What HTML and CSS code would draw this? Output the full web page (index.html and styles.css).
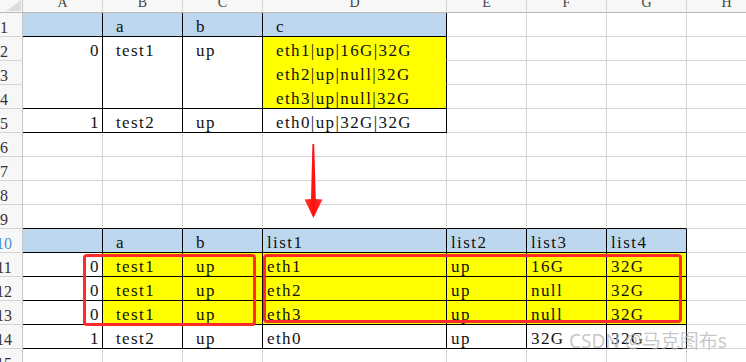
FILE: index.html
```html
<!DOCTYPE html>
<html>
<head>
<meta charset="utf-8">
<link rel="stylesheet" href="styles.css">
</head>
<body>
<div class="sheet">
  <div class="corner"><div class="tri"></div></div>
  <div class="ch"><span>A</span></div><div class="ch"><span>B</span></div><div class="ch"><span>C</span></div><div class="ch"><span>D</span></div><div class="ch"><span>E</span></div><div class="ch"><span>F</span></div><div class="ch"><span>G</span></div><div class="ch"><span>H</span></div>

  <div class="rh"><span>1</span></div>
  <div class="c hd kr kb"></div><div class="c hd kr kb ind">a</div><div class="c hd kr kb ind">b</div><div class="c hd kr kb ind">c</div><div class="c"></div><div class="c"></div><div class="c"></div><div class="c"></div>

  <div class="rh"><span>2</span></div>
  <div class="c m3 num kr kb">0</div><div class="c m3 ind kr kb">test1</div><div class="c m3 ind kr kb">up</div><div class="c y kr yb ind">eth1|up|16G|32G</div><div class="c"></div><div class="c"></div><div class="c"></div><div class="c"></div>

  <div class="rh"><span>3</span></div>
  <div class="c y kr yb ind">eth2|up|null|32G</div><div class="c"></div><div class="c"></div><div class="c"></div><div class="c"></div>

  <div class="rh"><span>4</span></div>
  <div class="c y kr kb ind">eth3|up|null|32G</div><div class="c"></div><div class="c"></div><div class="c"></div><div class="c"></div>

  <div class="rh"><span>5</span></div>
  <div class="c num kr kb">1</div><div class="c ind kr kb">test2</div><div class="c ind kr kb">up</div><div class="c ind kr kb">eth0|up|32G|32G</div><div class="c"></div><div class="c"></div><div class="c"></div><div class="c"></div>

  <div class="rh"><span>6</span></div>
  <div class="c"></div><div class="c"></div><div class="c"></div><div class="c"></div><div class="c"></div><div class="c"></div><div class="c"></div><div class="c"></div>

  <div class="rh"><span>7</span></div>
  <div class="c"></div><div class="c"></div><div class="c"></div><div class="c"></div><div class="c"></div><div class="c"></div><div class="c"></div><div class="c"></div>

  <div class="rh"><span>8</span></div>
  <div class="c"></div><div class="c"></div><div class="c"></div><div class="c"></div><div class="c"></div><div class="c"></div><div class="c"></div><div class="c"></div>

  <div class="rh"><span>9</span></div>
  <div class="c kb"></div><div class="c kb"></div><div class="c kb"></div><div class="c kb"></div><div class="c kb"></div><div class="c kb"></div><div class="c kb"></div><div class="c"></div>

  <div class="rh sel"><span>10</span></div>
  <div class="c hd kr kb"></div><div class="c hd kr kb ind">a</div><div class="c hd kr kb ind">b</div><div class="c hd kr kb">list1</div><div class="c hd kr kb">list2</div><div class="c hd kr kb">list3</div><div class="c hd kr kb">list4</div><div class="c"></div>

  <div class="rh"><span>11</span></div>
  <div class="c num kr kb">0</div><div class="c y kr kb ind">test1</div><div class="c y kr kb ind">up</div><div class="c y kr kb">eth1</div><div class="c y kr kb">up</div><div class="c y kr kb">16G</div><div class="c y kr kb">32G</div><div class="c"></div>

  <div class="rh"><span>12</span></div>
  <div class="c num kr kb">0</div><div class="c y kr kb ind">test1</div><div class="c y kr kb ind">up</div><div class="c y kr kb">eth2</div><div class="c y kr kb">up</div><div class="c y kr kb">null</div><div class="c y kr kb">32G</div><div class="c"></div>

  <div class="rh"><span>13</span></div>
  <div class="c num kr kb">0</div><div class="c y kr kb ind">test1</div><div class="c y kr kb ind">up</div><div class="c y kr kb">eth3</div><div class="c y kr kb">up</div><div class="c y kr kb">null</div><div class="c y kr kb">32G</div><div class="c"></div>

  <div class="rh"><span>14</span></div>
  <div class="c num kr kb">1</div><div class="c kr kb ind">test2</div><div class="c kr kb ind">up</div><div class="c kr kb">eth0</div><div class="c kr kb">up</div><div class="c kr kb">32G</div><div class="c kr kb">32G</div><div class="c"></div>

  <div class="rh"><span>15</span></div>
  <div class="c"></div><div class="c"></div><div class="c"></div><div class="c"></div><div class="c"></div><div class="c"></div><div class="c"></div><div class="c"></div>

  <svg class="arrow" width="22" height="78" viewBox="303 142 22 78">
    <defs>
      <linearGradient id="ag" x1="0" y1="0" x2="1" y2="0">
        <stop offset="0" stop-color="#ff3b30"/>
        <stop offset="0.5" stop-color="#ff1010"/>
        <stop offset="1" stop-color="#ff3b30"/>
      </linearGradient>
    </defs>
    <polygon fill="url(#ag)" points="312.4,144 314.2,144 315.8,199 322.5,199.5 313.4,218 304.6,199.5 311,199"/>
  </svg>
  <div class="box box1"></div>
  <div class="box box2"></div>
  <div class="wm">CSDN @马克图布s</div>
</div>
</body>
</html>
```
FILE: styles.css
```css
html, body {
  margin: 0;
  padding: 0;
  background: #ffffff;
}
body {
  width: 746px;
  height: 362px;
  overflow: hidden;
}
.sheet {
  position: relative;
  display: grid;
  grid-template-columns: 23px 80px 80px 80px 184px 80px 80px 80px 80px;
  grid-template-rows: 13px repeat(15, 24px);
  width: 767px;
}
.corner {
  box-sizing: border-box;
  border-right: 1px solid #c8c8c8;
  border-bottom: 1px solid #b8b8b8;
  background: #f7f7f7;
  display: flex;
  justify-content: flex-end;
  align-items: flex-end;
  padding: 0 1px 1px 0;
}
.tri {
  width: 15px;
  height: 11px;
  background: #dcdcdc;
  clip-path: polygon(100% 0, 100% 100%, 0 100%);
}
.ch {
  box-sizing: border-box;
  border-right: 1px solid #d4d4d4;
  border-bottom: 1px solid #b8b8b8;
  background: #f7f7f7;
  display: flex;
  justify-content: center;
  align-items: flex-start;
  font-family: "Liberation Serif", serif;
  font-size: 14px;
  line-height: 6px;
  color: #444444;
  overflow: hidden;
}
.rh {
  box-sizing: border-box;
  border-right: 1px solid #c8c8c8;
  border-bottom: 1px solid #d4d4d4;
  background: #f7f7f7;
  display: flex;
  justify-content: center;
  align-items: flex-start;
  padding: 7px 14px 0 0;
  font-family: "Liberation Serif", serif;
  font-size: 16px;
  line-height: 16px;
  color: #3a3030;
  white-space: nowrap;
}
.rh.sel {
  color: #4a94cc;
}
.c {
  box-sizing: border-box;
  border-right: 1px solid #d4d4d4;
  border-bottom: 1px solid #d4d4d4;
  padding: 6px 3px 0 4px;
  font-family: "Liberation Serif", serif;
  font-size: 17px;
  letter-spacing: 1.4px;
  line-height: 16px;
  color: #111111;
  white-space: nowrap;
}
.hd { background: #bdd7ee; }
.y { background: #ffff00; }
.kr { border-right-color: #000000; }
.kb { border-bottom-color: #000000; }
.yb { border-bottom-color: #ffff00; }
.ind { padding-left: 13px; }
.num { text-align: right; padding-right: 2px; }
.m3 { grid-row: span 3; }
.arrow {
  position: absolute;
  left: 303px;
  top: 142px;
}
.box {
  position: absolute;
  box-sizing: border-box;
  border: 3px solid #ff2a2a;
  border-radius: 4px;
}
.box1 {
  left: 83px;
  top: 254px;
  width: 173px;
  height: 72px;
}
.box2 {
  left: 263px;
  top: 254px;
  width: 419px;
  height: 69px;
}
.wm {
  position: absolute;
  left: 569px;
  top: 329px;
  font-family: "Noto Sans", "Noto Sans CJK SC", sans-serif;
  font-size: 19px;
  line-height: 24px;
  color: rgba(175, 175, 175, 0.7);
  white-space: nowrap;
}
```
